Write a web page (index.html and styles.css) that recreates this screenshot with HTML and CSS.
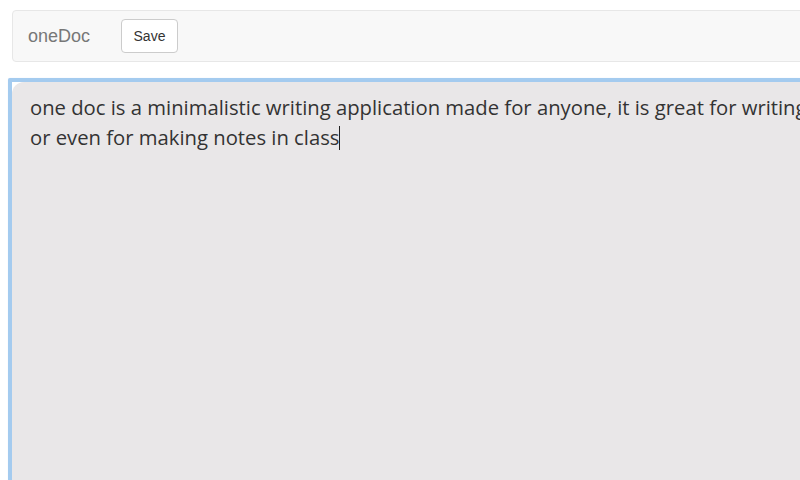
FILE: index.html
```html
<!DOCTYPE html>
<html>
<head>
<meta charset="utf-8">
<title>oneDoc</title>
<link rel="stylesheet" href="styles.css">
</head>
<body>
<div class="page">
  <div class="canvas">
    <nav class="navbar">
      <span class="brand">oneDoc</span>
      <button class="btn">Save</button>
    </nav>
    <div class="editor">
      <div class="sheet">
        <p class="doc">one doc is a minimalistic writing application made for anyone, it is great for writing or even for making notes in class<span class="caret"></span></p>
      </div>
    </div>
  </div>
</div>
</body>
</html>
```
FILE: styles.css
```css
html, body {
  margin: 0;
  padding: 0;
  background: #ffffff;
  overflow: hidden;
}
.page {
  width: 800px;
  height: 480px;
  overflow: hidden;
}
.canvas {
  width: 1000px;
  padding-top: 10px;
}
.navbar {
  margin-left: 12px;
  height: 50px;
  background: #f8f8f8;
  border: 1px solid #e7e7e7;
  border-radius: 4px;
  display: flex;
  align-items: center;
  font-family: "Liberation Sans", Arial, sans-serif;
}
.brand {
  color: #777777;
  font-size: 18px;
  margin-left: 15px;
  width: 93px;
}
.btn {
  font-family: "Liberation Sans", Arial, sans-serif;
  font-size: 14px;
  color: #333333;
  background: #ffffff;
  border: 1px solid #cccccc;
  border-radius: 4px;
  height: 34px;
  width: 57px;
  padding: 0;
}
.editor {
  margin-top: 16px;
  margin-left: 8px;
  height: 420px;
  background: #ffffff;
  border: 4px solid #a4cbef;
  border-radius: 2px;
  box-shadow: 0 0 1px 0 #cfe2f5;
}
.sheet {
  height: 100%;
  background: #e9e7e8;
  border-top-left-radius: 12px;
  padding: 10px 16px 0 18px;
}
.doc {
  margin: 0;
  width: 790px;
  font-family: "Open Sans", sans-serif;
  font-size: 20.25px;
  line-height: 30px;
  color: #333333;
}
.caret {
  display: inline-block;
  width: 0;
  height: 24px;
  border-left: 1px solid #222222;
  vertical-align: -5px;
}
```
